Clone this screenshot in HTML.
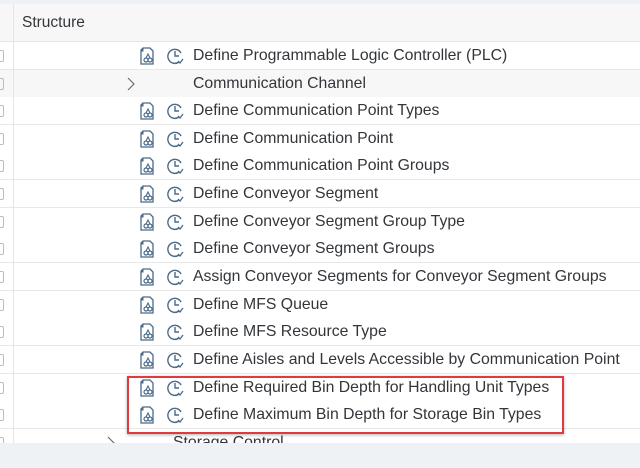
<!DOCTYPE html>
<html><head><style>
body{margin:0;width:640px;height:468px;overflow:hidden;background:#fff;font-family:"Liberation Sans",Arial,sans-serif;color:#32363a;position:relative}
.top{position:absolute;left:0;top:0;width:640px;height:4px;background:#eef2f6}
.hdr{position:absolute;left:0;top:4px;width:640px;height:37px;background:#f7f7f7;border-bottom:1px solid #e5e5e5}
.hdr span{position:absolute;left:22px;top:10px;font-size:15.5px}
.vl{position:absolute;left:13px;top:4px;width:1px;height:440px;background:#e5e5e5}
.row{position:absolute;left:0;width:640px;height:27px;border-bottom:1px solid #e8e8e8;font-size:15.8px;background:#fff}
.row.n{background:#f7f7f7}
.cb{position:absolute;left:-8px;top:8px;width:10px;height:10px;border:1px solid #c0b8c8;border-radius:2px}
.t{position:absolute;top:5px;left:193px;white-space:nowrap}
.d{position:absolute;top:5px;left:139px}
.c{position:absolute;top:5px;left:166px}
.chev{position:absolute;top:7px}
.bot{position:absolute;left:0;top:443px;width:640px;height:25px;background:#eef2f5}
.red{position:absolute;left:127px;top:376px;width:433px;height:54px;border:2px solid #e0393e;box-shadow:0 1px 3px rgba(0,0,0,.3)}
</style></head><body>
<svg width="0" height="0" style="position:absolute">
<symbol id="doc" viewBox="0 0 16 18"><path d="M4 1h7l3 3v13H2V3z" fill="none" stroke="#4a6a88" stroke-width="1.3"/><path d="M4 1v3H2" fill="#4a6a88" stroke="#4a6a88"/><circle cx="7" cy="13" r="2" fill="none" stroke="#4a6a88" stroke-width="1.2"/><circle cx="11" cy="13" r="2" fill="none" stroke="#4a6a88" stroke-width="1.2"/><path d="M7 11l2-4 2 4" fill="none" stroke="#4a6a88" stroke-width="1.1"/></symbol>
<symbol id="clk" viewBox="0 0 18 18"><path d="M15 6A7 7 0 1 0 13 15" fill="none" stroke="#4a6a88" stroke-width="1.4"/><path d="M9 4v5h4" fill="none" stroke="#4a6a88" stroke-width="1.4"/><path d="M12 14l2 2 3-4" fill="none" stroke="#4a6a88" stroke-width="1.3"/></symbol>
<symbol id="chv" viewBox="0 0 8 14"><path d="M1 1l6 6-6 6" fill="none" stroke="#6a6d70" stroke-width="1.2"/></symbol>
</svg>
<div class="top"></div>
<div class="hdr"><span>Structure</span></div>

<div class="row" style="top:42px"><div class="cb"></div><svg class="d" width="16" height="18"><use href="#doc"/></svg><svg class="c" width="18" height="18"><use href="#clk"/></svg><span class="t">Define Programmable Logic Controller (PLC)</span></div>
<div class="row n" style="top:70px"><div class="cb"></div><svg class="chev" style="left:127px" width="8" height="14"><use href="#chv"/></svg><span class="t">Communication Channel</span></div>
<div class="row" style="top:97px"><div class="cb"></div><svg class="d" width="16" height="18"><use href="#doc"/></svg><svg class="c" width="18" height="18"><use href="#clk"/></svg><span class="t">Define Communication Point Types</span></div>
<div class="row" style="top:125px"><div class="cb"></div><svg class="d" width="16" height="18"><use href="#doc"/></svg><svg class="c" width="18" height="18"><use href="#clk"/></svg><span class="t">Define Communication Point</span></div>
<div class="row" style="top:152px"><div class="cb"></div><svg class="d" width="16" height="18"><use href="#doc"/></svg><svg class="c" width="18" height="18"><use href="#clk"/></svg><span class="t">Define Communication Point Groups</span></div>
<div class="row" style="top:180px"><div class="cb"></div><svg class="d" width="16" height="18"><use href="#doc"/></svg><svg class="c" width="18" height="18"><use href="#clk"/></svg><span class="t">Define Conveyor Segment</span></div>
<div class="row" style="top:208px"><div class="cb"></div><svg class="d" width="16" height="18"><use href="#doc"/></svg><svg class="c" width="18" height="18"><use href="#clk"/></svg><span class="t">Define Conveyor Segment Group Type</span></div>
<div class="row" style="top:235px"><div class="cb"></div><svg class="d" width="16" height="18"><use href="#doc"/></svg><svg class="c" width="18" height="18"><use href="#clk"/></svg><span class="t">Define Conveyor Segment Groups</span></div>
<div class="row" style="top:263px"><div class="cb"></div><svg class="d" width="16" height="18"><use href="#doc"/></svg><svg class="c" width="18" height="18"><use href="#clk"/></svg><span class="t">Assign Conveyor Segments for Conveyor Segment Groups</span></div>
<div class="row" style="top:291px"><div class="cb"></div><svg class="d" width="16" height="18"><use href="#doc"/></svg><svg class="c" width="18" height="18"><use href="#clk"/></svg><span class="t">Define MFS Queue</span></div>
<div class="row" style="top:318px"><div class="cb"></div><svg class="d" width="16" height="18"><use href="#doc"/></svg><svg class="c" width="18" height="18"><use href="#clk"/></svg><span class="t">Define MFS Resource Type</span></div>
<div class="row" style="top:346px"><div class="cb"></div><svg class="d" width="16" height="18"><use href="#doc"/></svg><svg class="c" width="18" height="18"><use href="#clk"/></svg><span class="t">Define Aisles and Levels Accessible by Communication Point</span></div>
<div class="row" style="top:374px"><div class="cb"></div><svg class="d" width="16" height="18"><use href="#doc"/></svg><svg class="c" width="18" height="18"><use href="#clk"/></svg><span class="t">Define Required Bin Depth for Handling Unit Types</span></div>
<div class="row" style="top:401px"><div class="cb"></div><svg class="d" width="16" height="18"><use href="#doc"/></svg><svg class="c" width="18" height="18"><use href="#clk"/></svg><span class="t">Define Maximum Bin Depth for Storage Bin Types</span></div>
<div class="row" style="top:429px"><div class="cb"></div><svg class="chev" style="left:107px" width="8" height="14"><use href="#chv"/></svg><span class="t" style="left:173px">Storage Control</span></div>

<div class="vl"></div>
<div class="bot"></div>
<div class="red"></div>
</body></html>
